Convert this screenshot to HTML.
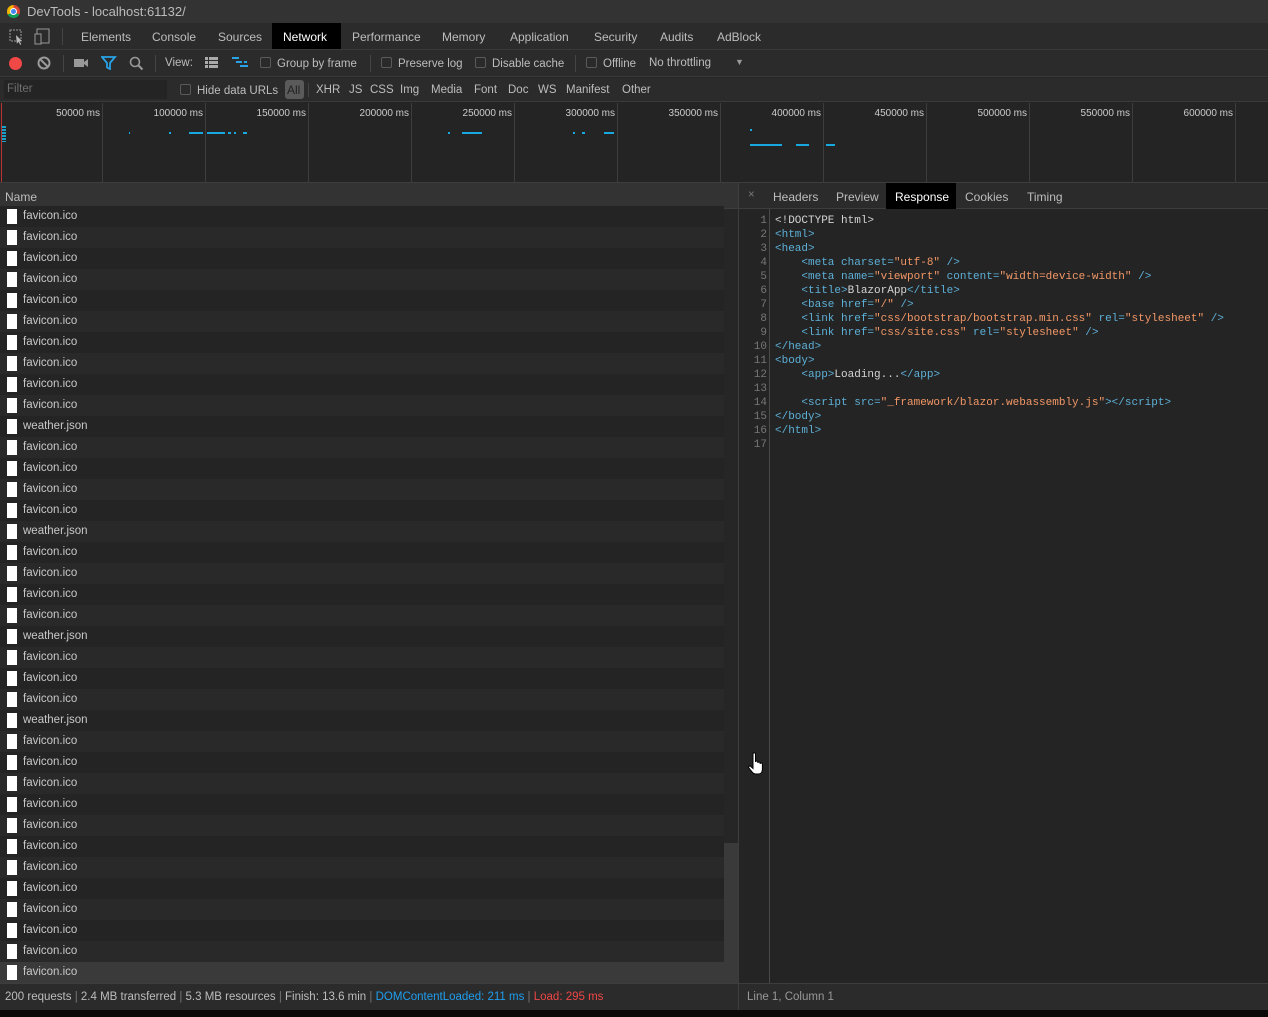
<!DOCTYPE html>
<html><head><style>
*{margin:0;padding:0;box-sizing:border-box}
body{width:1268px;height:1017px;background:#242424;font-family:"Liberation Sans",sans-serif;font-size:11.5px;color:#bdbdbd;position:relative;overflow:hidden}
.a{position:absolute;white-space:nowrap}
.cb{display:inline-block;width:11px;height:11px;border:1px solid #5a5a5a;border-radius:2px;background:#2a2a2a;vertical-align:-1px;margin-right:6px}
.code{font-family:"Liberation Mono",monospace;font-size:11px;line-height:14px}
pre.code{white-space:pre}
.t{color:#5db0d7}.s{color:#f29766}.w{color:#d4d4d4}
</style></head><body>
<div class="a" style="left:0;top:0;width:1268px;height:23px;background:#333"></div>
<div class="a" style="left:7px;top:5px;width:13px;height:13px;border-radius:50%;background:conic-gradient(#db4437 0 120deg,#0f9d58 120deg 240deg,#f4b400 240deg)"></div>
<div class="a" style="left:10px;top:8px;width:7px;height:7px;border-radius:50%;background:#4285f4;border:1px solid #fff"></div>
<div class="a" style="left:27px;top:4px;color:#bbb;font-size:13px">DevTools - localhost:61132/</div>
<div class="a" style="left:0;top:23px;width:1268px;height:27px;background:#2b2b2b;border-bottom:1px solid #3a3a3a"></div>
<svg class="a" style="left:8px;top:28px" width="46" height="18"><rect x="2" y="2" width="11" height="11" fill="none" stroke="#999" stroke-dasharray="2 1"/><path d="M8 7l6 6-2.5.3 1.8 3-1 .6-1.8-3-1.7 1.7z" fill="#bbb"/><rect x="29" y="1" width="12" height="14" fill="none" stroke="#999"/><rect x="27" y="6" width="6" height="10" fill="#2b2b2b" stroke="#999"/></svg>
<div class="a" style="left:62px;top:28px;width:1px;height:17px;background:#444"></div>
<div class="a" style="left:272px;top:23px;width:69px;height:26px;background:#000"></div>
<div class="a" style="top:30px;left:0;font-size:12px;color:#bdbdbd">
<span class="a" style="left:81px">Elements</span><span class="a" style="left:152px">Console</span><span class="a" style="left:218px">Sources</span><span class="a" style="left:283px;color:#fff">Network</span><span class="a" style="left:352px">Performance</span><span class="a" style="left:442px">Memory</span><span class="a" style="left:510px">Application</span><span class="a" style="left:594px">Security</span><span class="a" style="left:660px">Audits</span><span class="a" style="left:717px">AdBlock</span></div>
<div class="a" style="left:0;top:50px;width:1268px;height:27px;background:#2b2b2b;border-bottom:1px solid #3a3a3a"></div>
<div class="a" style="left:9px;top:57px;width:13px;height:13px;border-radius:50%;background:#f04747"></div>
<svg class="a" style="left:37px;top:56px" width="14" height="14"><circle cx="7" cy="7" r="5.5" fill="none" stroke="#999" stroke-width="2"/><path d="M3 3l8 8" stroke="#999" stroke-width="2"/></svg>
<div class="a" style="left:63px;top:55px;width:1px;height:17px;background:#444"></div>
<svg class="a" style="left:73px;top:57px" width="16" height="12"><rect x="1" y="2" width="10" height="8" fill="#999"/><path d="M11 5l4-3v8l-4-3z" fill="#999"/></svg>
<svg class="a" style="left:101px;top:56px" width="16" height="14"><path d="M1 1h13l-5 6v6l-3-1.5V7z" fill="none" stroke="#29a3e8" stroke-width="1.8"/></svg>
<svg class="a" style="left:129px;top:56px" width="15" height="15"><circle cx="6" cy="6" r="4.5" fill="none" stroke="#999" stroke-width="1.6"/><path d="M9 9l4.5 4.5" stroke="#999" stroke-width="2"/></svg>
<div class="a" style="left:155px;top:55px;width:1px;height:17px;background:#444"></div>
<div class="a" style="left:165px;top:57px">View:</div>
<svg class="a" style="left:204px;top:57px" width="16" height="12"><g fill="#aaa"><rect x="1" y="0" width="3" height="3"/><rect x="5" y="0" width="9" height="3"/><rect x="1" y="4" width="3" height="3"/><rect x="5" y="4" width="9" height="3"/><rect x="1" y="8" width="3" height="3"/><rect x="5" y="8" width="9" height="3"/></g></svg>
<svg class="a" style="left:231px;top:57px" width="18" height="12"><g fill="#29a3e8"><rect x="1" y="0" width="7" height="2"/><rect x="5" y="4" width="6" height="2"/><rect x="9" y="8" width="8" height="2"/><rect x="13" y="4" width="3" height="2"/></g></svg>
<div class="a" style="left:260px;top:57px"><span class="cb"></span>Group by frame</div>
<div class="a" style="left:370px;top:55px;width:1px;height:17px;background:#444"></div>
<div class="a" style="left:381px;top:57px"><span class="cb"></span>Preserve log</div>
<div class="a" style="left:475px;top:57px"><span class="cb"></span>Disable cache</div>
<div class="a" style="left:575px;top:55px;width:1px;height:17px;background:#444"></div>
<div class="a" style="left:586px;top:57px"><span class="cb"></span>Offline</div>
<div class="a" style="left:649px;top:57px">No throttling</div>
<div class="a" style="left:735px;top:57px;font-size:9px;color:#999">▼</div>
<div class="a" style="left:0;top:78px;width:1268px;height:24px;background:#2b2b2b;border-bottom:1px solid #3a3a3a"></div>
<div class="a" style="left:4px;top:80px;width:163px;height:19px;background:#242424;color:#6f6f6f;padding:3px 3px">Filter</div>
<div class="a" style="left:180px;top:84px"><span class="cb"></span>Hide data URLs</div>
<div class="a" style="left:285px;top:80px;width:19px;height:19px;background:#5a5a5a;border-radius:3px;color:#222;padding:3px 2px;font-size:12px">All</div>
<div class="a" style="left:308px;top:83px;width:1px;height:14px;background:#444"></div>
<div class="a" style="top:84px;left:0"><span class="a" style="left:316px">XHR</span><span class="a" style="left:349px">JS</span><span class="a" style="left:370px">CSS</span><span class="a" style="left:400px">Img</span><span class="a" style="left:431px">Media</span><span class="a" style="left:474px">Font</span><span class="a" style="left:508px">Doc</span><span class="a" style="left:538px">WS</span><span class="a" style="left:566px">Manifest</span><span class="a" style="left:622px">Other</span></div>
<div class="a" style="left:0;top:103px;width:1268px;height:80px;background:#242424"></div>
<div class="a" style="left:1px;top:103px;width:1px;height:80px;background:#b33"></div>
<div class="a" style="left:2px;top:126px;width:4px;height:16px;background:repeating-linear-gradient(#1ba1c8 0 2px,transparent 2px 3px)"></div>
<svg class="a" style="left:0;top:103px" width="1268" height="80"><g stroke="#3d3d3d">
<path d="M102.5 0V80M205.5 0V80M308.5 0V80M411.5 0V80M514.5 0V80M617.5 0V80M720.5 0V80M823.5 0V80M926.5 0V80M1029.5 0V80M1132.5 0V80M1235.5 0V80"/></g>
<g fill="#17a8e0"><rect x="129" y="29" width="1" height="2"/><rect x="169" y="29" width="2" height="2"/><rect x="189" y="29" width="14" height="2"/><rect x="207" y="29" width="18" height="2"/><rect x="228" y="29" width="3" height="2"/><rect x="234" y="29" width="2" height="2"/><rect x="243" y="29" width="4" height="2"/>
<rect x="448" y="29" width="2" height="2"/><rect x="462" y="29" width="20" height="2"/><rect x="573" y="29" width="2" height="2"/><rect x="582" y="29" width="3" height="2"/><rect x="604" y="29" width="10" height="2"/>
<rect x="750" y="26" width="2" height="2"/><rect x="750" y="41" width="32" height="2"/><rect x="796" y="41" width="13" height="2"/><rect x="826" y="41" width="9" height="2"/></g>
<g fill="#ccc" font-size="10" font-family="Liberation Sans" text-anchor="end"><text x="100" y="13">50000 ms</text><text x="203" y="13">100000 ms</text><text x="306" y="13">150000 ms</text><text x="409" y="13">200000 ms</text><text x="512" y="13">250000 ms</text><text x="615" y="13">300000 ms</text><text x="718" y="13">350000 ms</text><text x="821" y="13">400000 ms</text><text x="924" y="13">450000 ms</text><text x="1027" y="13">500000 ms</text><text x="1130" y="13">550000 ms</text><text x="1233" y="13">600000 ms</text></g></svg>
<div class="a" style="left:0;top:182px;width:1268px;height:1px;background:#3d3d3d"></div>
<div class="a" style="left:0;top:183px;width:738px;height:26px;background:#333;border-bottom:1px solid #3d3d3d"></div>
<div class="a" style="left:5px;top:190px;font-size:12px">Name</div>
<div class="a" id="rows" style="left:0;top:206px;width:724px"></div>
<div class="a" style="left:724px;top:209px;width:14px;height:774px;background:#262626"></div>
<div class="a" style="left:724px;top:843px;width:14px;height:140px;background:#3a3a3a"></div>
<div class="a" style="left:738px;top:183px;width:1px;height:834px;background:#3d3d3d"></div>
<div class="a" style="left:739px;top:183px;width:529px;height:26px;background:#2b2b2b;border-bottom:1px solid #3d3d3d"></div>
<div class="a" style="left:748px;top:189px;color:#777">×</div>
<div class="a" style="left:886px;top:183px;width:70px;height:26px;background:#000"></div>
<div class="a" style="top:190px;left:0;font-size:12px"><span class="a" style="left:773px">Headers</span><span class="a" style="left:836px">Preview</span><span class="a" style="left:895px;color:#fff">Response</span><span class="a" style="left:965px">Cookies</span><span class="a" style="left:1027px">Timing</span></div>
<div class="a" style="left:739px;top:209px;width:31px;height:774px;background:#242424;border-right:1px solid #4a4a4a"></div>
<div class="a code" style="left:739px;top:214px;width:28px;text-align:right;color:#777">1<br>2<br>3<br>4<br>5<br>6<br>7<br>8<br>9<br>10<br>11<br>12<br>13<br>14<br>15<br>16<br>17</div>
<pre class="a code w" style="left:775px;top:214px">&lt;!DOCTYPE html&gt;
<span class="t">&lt;html&gt;</span>
<span class="t">&lt;head&gt;</span>
    <span class="t">&lt;meta charset=</span><span class="s">"utf-8"</span><span class="t"> /&gt;</span>
    <span class="t">&lt;meta name=</span><span class="s">"viewport"</span><span class="t"> content=</span><span class="s">"width=device-width"</span><span class="t"> /&gt;</span>
    <span class="t">&lt;title&gt;</span>BlazorApp<span class="t">&lt;/title&gt;</span>
    <span class="t">&lt;base href=</span><span class="s">"/"</span><span class="t"> /&gt;</span>
    <span class="t">&lt;link href=</span><span class="s">"css/bootstrap/bootstrap.min.css"</span><span class="t"> rel=</span><span class="s">"stylesheet"</span><span class="t"> /&gt;</span>
    <span class="t">&lt;link href=</span><span class="s">"css/site.css"</span><span class="t"> rel=</span><span class="s">"stylesheet"</span><span class="t"> /&gt;</span>
<span class="t">&lt;/head&gt;</span>
<span class="t">&lt;body&gt;</span>
    <span class="t">&lt;app&gt;</span>Loading...<span class="t">&lt;/app&gt;</span>

    <span class="t">&lt;script src=</span><span class="s">"_framework/blazor.webassembly.js"</span><span class="t">&gt;&lt;/script&gt;</span>
<span class="t">&lt;/body&gt;</span>
<span class="t">&lt;/html&gt;</span>
</pre>
<svg class="a" style="left:748px;top:752px" width="18" height="24"><path d="M5 2c0-1.5 2.5-1.5 2.5 0v8c0-1.3 2.300-1.3 2.3 0v1c0-1.3 2.3-1.3 2.3 0v1c0-1.3 2.3-1.3 2.3 0v5c0 3-1.5 5-4 5h-3c-2 0-3-1.5-4.5-3.5L1 16c-1-1.3.5-2.7 1.8-1.5L5 16.5z" fill="#fff" stroke="#000" stroke-width="1"/></svg>
<div class="a" style="left:0;top:983px;width:1268px;height:27px;background:#2b2b2b;border-top:1px solid #3d3d3d"></div>
<div class="a" style="left:738px;top:983px;width:1px;height:27px;background:#3d3d3d"></div>
<div class="a" style="left:5px;top:991px">200 requests <span style="color:#777">|</span> 2.4 MB transferred <span style="color:#777">|</span> 5.3 MB resources <span style="color:#777">|</span> Finish: 13.6 min <span style="color:#777">|</span> <span style="color:#1e9ff0">DOMContentLoaded: 211 ms</span> <span style="color:#777">|</span> <span style="color:#ef4545">Load: 295 ms</span></div>
<div class="a" style="left:747px;top:991px;color:#999">Line 1, Column 1</div>
<div class="a" style="left:0;top:1010px;width:1268px;height:7px;background:#0a0a0a"></div>
<script>
var h='';for(var i=0;i<37;i++){var n=(i==10||i==15||i==20||i==24)?'weather.json':'favicon.ico';var bg=i==36?'#3a3a3a':(i%2?'#292929':'#242424');h+='<div style="position:relative;height:21px;background:'+bg+'"><div style="position:absolute;left:7px;top:3px;width:10px;height:15px;background:#fff"></div><div style="position:absolute;left:23px;top:4px;color:#c8c8c8">'+n+'</div></div>';}
document.getElementById('rows').innerHTML=h;
</script>
</body></html>
